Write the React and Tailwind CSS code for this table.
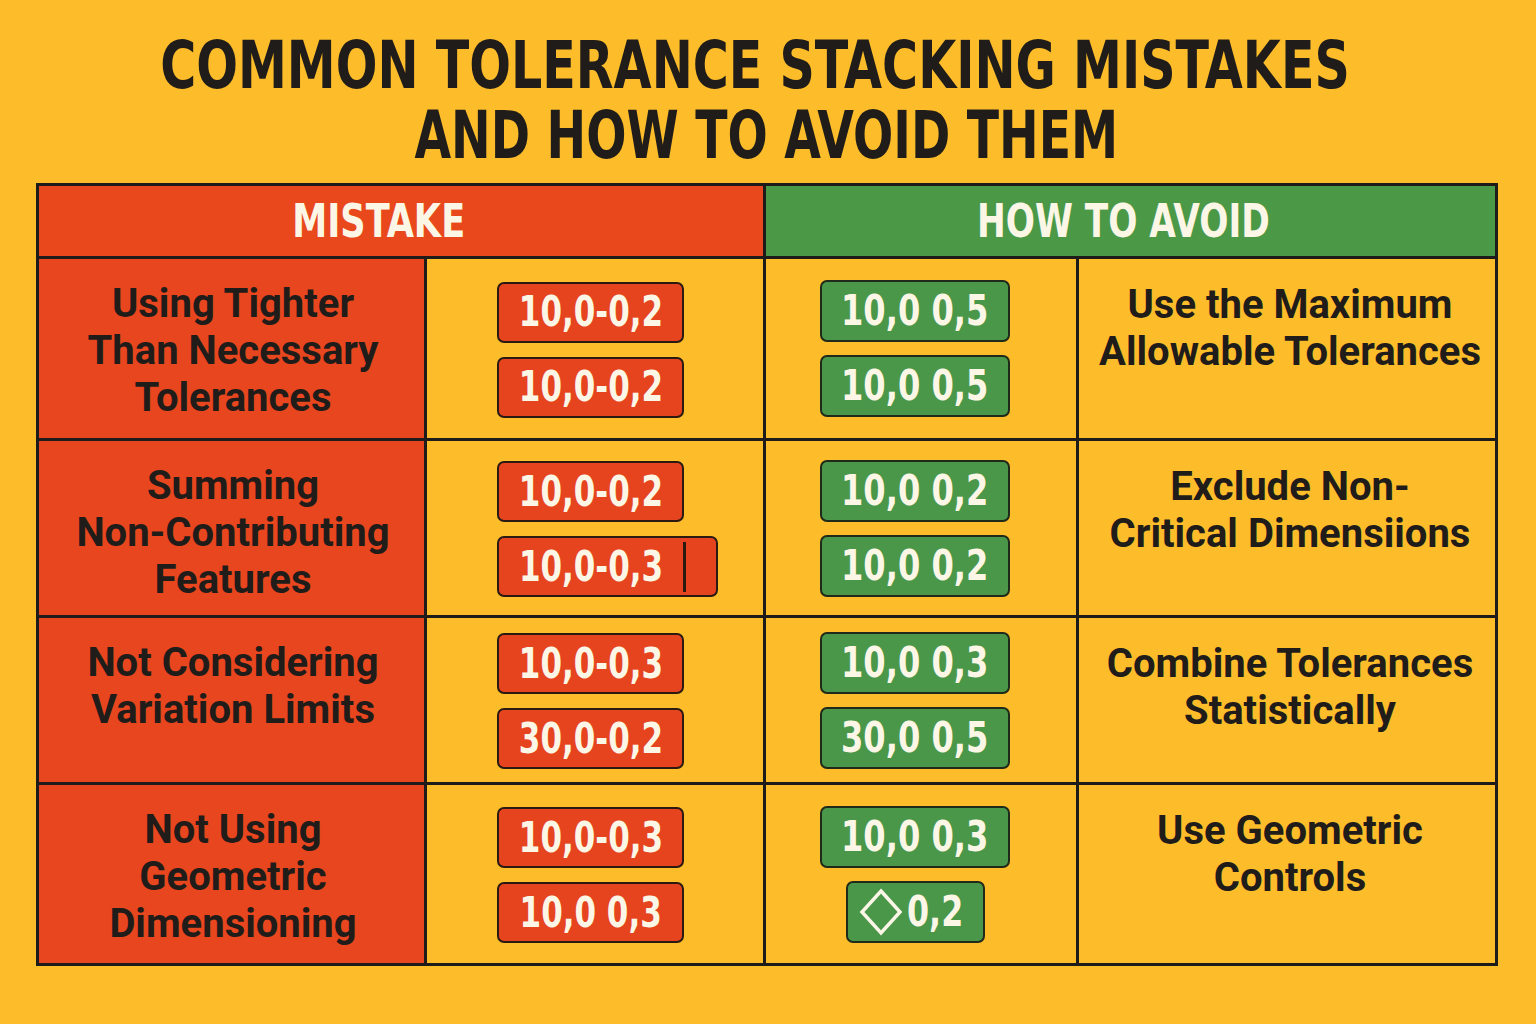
const narrow = { fontFamily: '"DejaVu Sans Condensed", "DejaVu Sans", Roboto, sans-serif' };
const body = { fontFamily: 'Roboto, "Liberation Sans", sans-serif' };

const rows = [
  {
    mistake: ['Using Tighter', 'Than Necessary', 'Tolerances'],
    bad: [{ t: '10,0-0,2' }, { t: '10,0-0,2' }],
    good: [{ t: '10,0 0,5' }, { t: '10,0 0,5' }],
    fix: ['Use the Maximum', 'Allowable Tolerances'],
    h: 'h-[179px]',
  },
  {
    mistake: ['Summing', 'Non-Contributing', 'Features'],
    bad: [{ t: '10,0-0,2' }, { t: '10,0-0,3', wide: true }],
    good: [{ t: '10,0 0,2' }, { t: '10,0 0,2' }],
    fix: ['Exclude Non-', 'Critical Dimensiions'],
    h: 'h-[174px]',
  },
  {
    mistake: ['Not Considering', 'Variation Limits'],
    bad: [{ t: '10,0-0,3' }, { t: '30,0-0,2' }],
    good: [{ t: '10,0 0,3' }, { t: '30,0 0,5' }],
    fix: ['Combine Tolerances', 'Statistically'],
    h: 'h-[164px]',
  },
  {
    mistake: ['Not Using', 'Geometric', 'Dimensioning'],
    bad: [{ t: '10,0-0,3' }, { t: '10,0 0,3' }],
    good: [{ t: '10,0 0,3' }, { t: '0,2', diamond: true }],
    fix: ['Use Geometric', 'Controls'],
    h: 'h-[178px]',
  },
];

function Diamond() {
  return (
    <svg width="44" height="48" viewBox="0 0 44 48" className="mr-[4px] shrink-0">
      <polygon points="22,3 41,24 22,45 3,24" fill="none" stroke="#fbf6e6" strokeWidth="3.5" />
    </svg>
  );
}

function RedBadge({ t, wide }) {
  if (wide) {
    return (
      <div className="flex items-center h-[61px] w-[221px] rounded-[7px] border-[2.5px] border-[#2a1a12] bg-[#e5441e]">
        <div className="w-[184px] text-center text-[42px] leading-none font-bold text-[#fbf6e6] scale-x-[0.82]" style={narrow}>{t}</div>
        <div className="w-[3px] h-[50px] bg-[#2a1a12]" />
      </div>
    );
  }
  return (
    <div className="flex items-center justify-center h-[61px] w-[187px] rounded-[7px] border-[2.5px] border-[#2a1a12] bg-[#e5441e] text-[42px] leading-none font-bold text-[#fbf6e6]" style={narrow}>
      <span className="inline-block scale-x-[0.82]">{t}</span>
    </div>
  );
}

function GreenBadge({ t, diamond }) {
  if (diamond) {
    return (
      <div className="flex items-center h-[62px] w-[139px] pl-[11px] rounded-[7px] border-[2.5px] border-[#1f2a1a] bg-[#4a974a] text-[42px] leading-none font-bold text-[#fbf6e6]" style={narrow}>
        <Diamond />
        <span className="inline-block scale-x-[0.84] origin-left">{t}</span>
      </div>
    );
  }
  return (
    <div className="flex items-center justify-center h-[62px] w-[190px] rounded-[7px] border-[2.5px] border-[#1f2a1a] bg-[#4a974a] text-[42px] leading-none font-bold text-[#fbf6e6]" style={narrow}>
      <span className="inline-block scale-x-[0.85]">{t}</span>
    </div>
  );
}

function Lines({ lines }) {
  return (
    <div className="text-[40px] leading-[47px] font-bold text-[#1f1c1a] text-center" style={body}>
      {lines.map((l) => (
        <div key={l}>{l}</div>
      ))}
    </div>
  );
}

export default function App() {
  return (
    <div className="w-[1536px] h-[1024px] bg-[#fdbd2b] overflow-hidden">
      <div className="pt-[31px] pr-[26px] text-center text-[65px] leading-[70px] font-bold text-[#1f1c1a]" style={narrow}>
        <div className="scale-x-[0.84]">COMMON TOLERANCE STACKING MISTAKES</div>
        <div className="pl-[28px] scale-x-[0.81]">AND HOW TO AVOID THEM</div>
      </div>

      <div className="ml-[36px] mt-[12px] w-[1462px] grid grid-cols-[385px_336px_310px_416px] gap-[3px] p-[3px] bg-[#1e1c1a]">
        <div className="col-span-2 h-[70px] flex items-center justify-center pr-[44px] bg-[#e8481c] text-[46px] font-bold text-[#fbf6e6]" style={narrow}>
          <span className="inline-block scale-x-[0.85]">MISTAKE</span>
        </div>
        <div className="col-span-2 h-[70px] flex items-center justify-center pr-[14px] bg-[#4b9847] text-[46px] font-bold text-[#fbf6e6]" style={narrow}>
          <span className="inline-block scale-x-[0.83]">HOW TO AVOID</span>
        </div>

        {rows.map((r, i) => (
          <div key={i} className="contents">
            <div className={`${r.h} bg-[#e8461e] pt-[21px] pl-[3px]`}>
              <Lines lines={r.mistake} />
            </div>
            <div className={`${r.h} bg-[#fdbd2b] flex flex-col justify-center items-start gap-[14px] pl-[70px] pt-[2px]`}>
              {r.bad.map((b, j) => (
                <RedBadge key={j} {...b} />
              ))}
            </div>
            <div className={`${r.h} bg-[#fdbd2b] flex flex-col justify-center items-center gap-[13px] pr-[12px]`}>
              {r.good.map((g, j) => (
                <GreenBadge key={j} {...g} />
              ))}
            </div>
            <div className={`${r.h} bg-[#fdbd2b] pt-[22px] pl-[6px]`}>
              <Lines lines={r.fix} />
            </div>
          </div>
        ))}
      </div>
    </div>
  );
}
